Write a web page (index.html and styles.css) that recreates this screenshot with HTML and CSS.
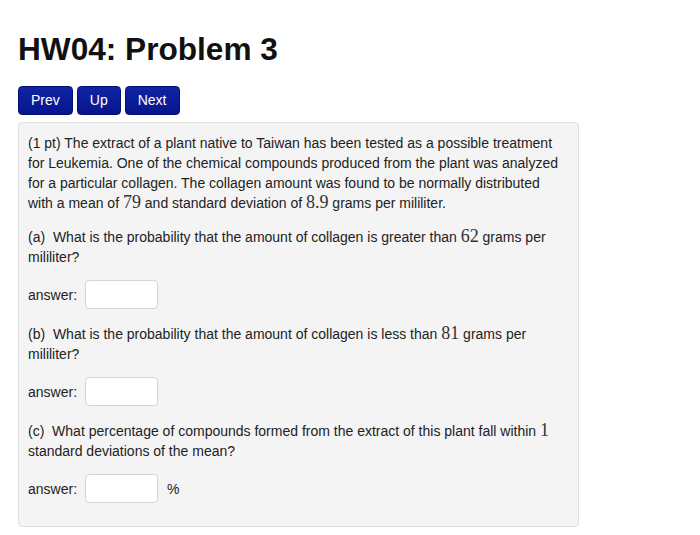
FILE: index.html
```html
<!DOCTYPE html>
<html lang="en">
<head>
    <meta charset="UTF-8">
    <title>HW04: Problem 3</title>
    <link rel="stylesheet" href="styles.css">
</head>
<body>

<div class="page">
    <h1>HW04: Problem 3</h1>

    <!-- Navigation -->
    <div class="nav">
        <a href="#" class="nav-button">Prev</a>
        <a href="#" class="nav-button">Up</a>
        <a href="#" class="nav-button">Next</a>
    </div>

    <!-- Problem body -->
    <div class="problem">
        <p>(1 pt) The extract of a plant native to Taiwan has been tested as a possible treatment for Leukemia. One of the chemical compounds produced from the plant was analyzed for a particular collagen. The collagen amount was found to be normally distributed with a mean of <span class="math">79</span> and standard deviation of <span class="math">8.9</span> grams per mililiter.</p>

        <p>(a)&nbsp; What is the probability that the amount of collagen is greater than <span class="math">62</span> grams per mililiter?</p>
        <div class="answer-row">
            <label>answer:</label>
            <input type="text" class="answer">
        </div>

        <p>(b)&nbsp; What is the probability that the amount of collagen is less than <span class="math">81</span> grams per mililiter?</p>
        <div class="answer-row">
            <label>answer:</label>
            <input type="text" class="answer">
        </div>

        <p>(c)&nbsp; What percentage of compounds formed from the extract of this plant fall within <span class="math">1</span> standard deviations of the mean?</p>
        <div class="answer-row last">
            <label>answer:</label>
            <input type="text" class="answer">
            <span class="unit">%</span>
        </div>
    </div>
</div>

</body>
</html>
```

FILE: styles.css
```css
body {
    margin: 0;
    background-color: #fff;
    font-family: "Liberation Sans", Arial, sans-serif;
    color: #222;
}
.page {
    padding: 0 0 0 18px;
    width: 561px;
}
h1 {
    font-size: 31.6px;
    font-weight: bold;
    color: #111;
    margin: 0;
    padding-top: 30px;
    line-height: 38px;
}

.nav {
    display: flex;
    gap: 4px;
    margin-top: 18px;
}
.nav-button {
    display: inline-block;
    height: 27px;
    line-height: 27px;
    padding: 0 12px;
    font-size: 14px;
    color: #fff;
    text-decoration: none;
    background: linear-gradient(#1224a4, #05158c);
    border: 1px solid #051170;
    border-radius: 4px;
}

.problem {
    margin-top: 7px;
    padding: 10px 10px 9px 9px;
    background-color: #f4f4f4;
    border: 1px solid #e0e0e0;
    border-radius: 4px;
    font-size: 14px;
    line-height: 20px;
}
.problem p {
    margin: 0 0 14px;
}
.math {
    font-family: "Liberation Serif", "Times New Roman", serif;
    font-size: 18px;
    line-height: 1;
    color: #333;
}
.answer-row {
    display: flex;
    align-items: center;
    margin: -1px 0 15px;
}
.answer-row.last {
    margin-bottom: 14px;
}
.answer-row label {
    width: 57px;
}
.answer {
    width: 63px;
    height: 19px;
    padding: 4px 4px;
    border: 1px solid #d4d4d4;
    border-radius: 4px;
    background: #fff;
    font-size: 14px;
}
.unit {
    margin-left: 9px;
}
```
